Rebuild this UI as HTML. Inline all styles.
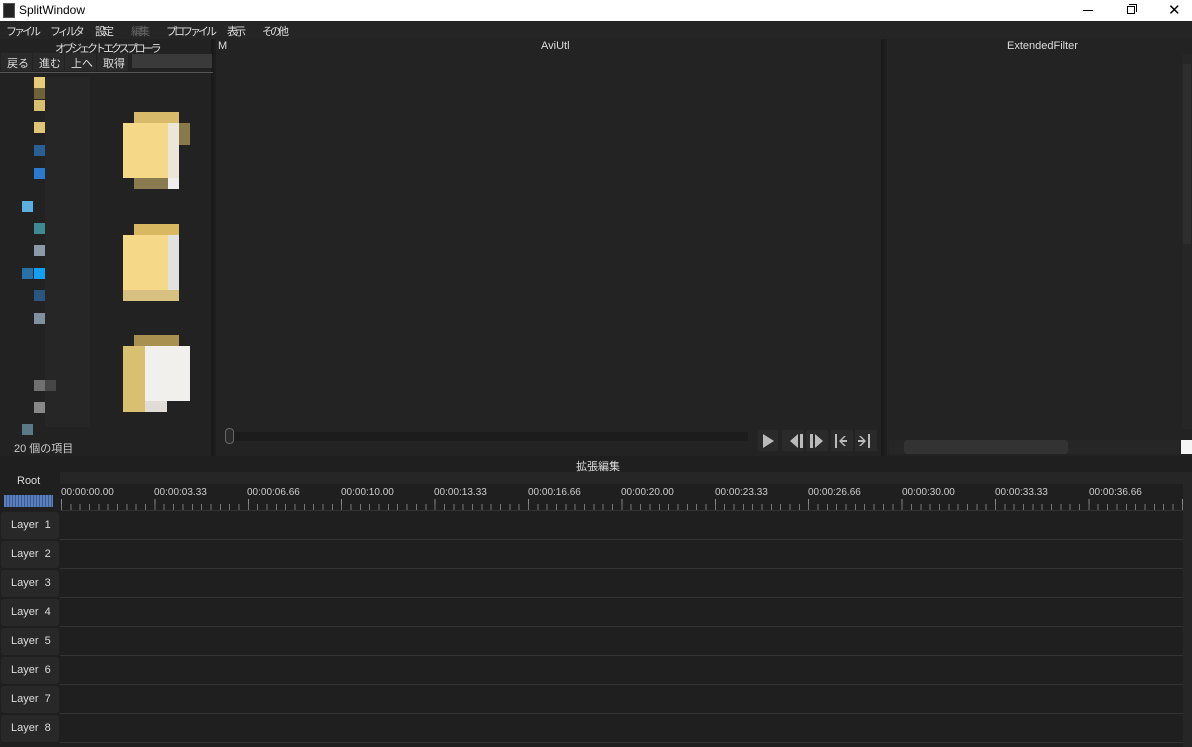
<!DOCTYPE html><html><head><meta charset="utf-8"><style>
*{margin:0;padding:0;box-sizing:border-box}
body{width:1192px;height:747px;background:#1e1e1e;font-family:"Liberation Sans","Noto Sans CJK JP",sans-serif;color:#ddd;position:relative;overflow:hidden;font-size:11px}
.a{position:absolute}
.t{position:absolute;white-space:nowrap}
.n{letter-spacing:-3px}
</style></head><body>
<div class="a" style="left:0;top:0;width:1192px;height:21px;background:#fff"></div>
<div class="a" style="left:3px;top:3px;width:12px;height:15px;background:#222;border:1px solid #555"></div>
<div class="t" style="left:19px;top:3px;font-size:12px;color:#000">SplitWindow</div>
<div class="a" style="left:1083px;top:10px;width:10px;height:1px;background:#000"></div>
<div class="a" style="left:1127px;top:6px;width:8px;height:8px;border:1px solid #000;background:#fff"></div>
<div class="a" style="left:1129px;top:4px;width:8px;height:8px;border-top:1px solid #000;border-right:1px solid #000"></div>
<div class="t" style="left:1168px;top:1px;font-size:15px;color:#000">✕</div>
<div class="a" style="left:0;top:21px;width:1192px;height:18px;background:#252525"></div>
<div class="t n" style="left:6px;top:23px">ファイル</div>
<div class="t n" style="left:50px;top:23px">フィルタ</div>
<div class="t n" style="left:95px;top:23px">設定</div>
<div class="t n" style="left:131px;top:23px;color:#666">編集</div>
<div class="t n" style="left:166px;top:23px">プロファイル</div>
<div class="t n" style="left:227px;top:23px">表示</div>
<div class="t n" style="left:262px;top:23px">その他</div>
<!-- left panel -->
<div class="a" style="left:0;top:39px;width:214px;height:417px;background:#222;border-right:3px solid #1a1a1a"></div>
<div class="t n" style="left:55px;top:40px;color:#ddd">オブジェクトエクスプローラ</div>
<div class="a" style="left:1px;top:53px;width:31px;height:18px;background:#2a2a2a"></div>
<div class="a" style="left:33px;top:53px;width:31px;height:18px;background:#2a2a2a"></div>
<div class="a" style="left:65px;top:53px;width:31px;height:18px;background:#2a2a2a"></div>
<div class="a" style="left:97px;top:53px;width:31px;height:18px;background:#2a2a2a"></div>
<div class="t" style="left:7px;top:55px">戻る</div><div class="t" style="left:39px;top:55px">進む</div><div class="t" style="left:71px;top:55px">上へ</div><div class="t" style="left:103px;top:55px">取得</div>
<div class="a" style="left:132px;top:54px;width:80px;height:14px;background:#3a3a3a"></div>
<div class="a" style="left:0;top:72px;width:213px;height:1px;background:#555"></div>
<div class="a" style="left:34px;top:77px;width:11px;height:11px;background:#e8cc7a"></div>
<div class="a" style="left:34px;top:88px;width:11px;height:11px;background:#6e6236"></div>
<div class="a" style="left:34px;top:100px;width:11px;height:11px;background:#d9bf70"></div>
<div class="a" style="left:34px;top:122px;width:11px;height:11px;background:#e0c578"></div>
<div class="a" style="left:34px;top:145px;width:11px;height:11px;background:#2a5f95"></div>
<div class="a" style="left:34px;top:168px;width:11px;height:11px;background:#2a7bd0"></div>
<div class="a" style="left:22px;top:201px;width:11px;height:11px;background:#5aaee0"></div>
<div class="a" style="left:34px;top:223px;width:11px;height:11px;background:#3f8a90"></div>
<div class="a" style="left:34px;top:245px;width:11px;height:11px;background:#8a9aa8"></div>
<div class="a" style="left:34px;top:268px;width:11px;height:11px;background:#12a0f5"></div>
<div class="a" style="left:22px;top:268px;width:11px;height:11px;background:#2870a8"></div>
<div class="a" style="left:34px;top:290px;width:11px;height:11px;background:#2a5580"></div>
<div class="a" style="left:34px;top:313px;width:11px;height:11px;background:#8090a0"></div>
<div class="a" style="left:34px;top:380px;width:22px;height:11px;background:#707070"></div>
<div class="a" style="left:34px;top:402px;width:11px;height:11px;background:#888"></div>
<div class="a" style="left:22px;top:424px;width:11px;height:11px;background:#5a7a8a"></div>
<div class="a" style="left:45px;top:77px;width:45px;height:350px;background:#2a2a2a;opacity:.6"></div>
<!-- blob1 -->
<div class="a" style="left:134px;top:112px;width:45px;height:11px;background:#d8bb6a"></div>
<div class="a" style="left:123px;top:123px;width:45px;height:55px;background:#f5d888"></div>
<div class="a" style="left:168px;top:123px;width:11px;height:55px;background:#ece6d8"></div>
<div class="a" style="left:179px;top:123px;width:11px;height:22px;background:#8a7a4a"></div>
<div class="a" style="left:134px;top:178px;width:45px;height:11px;background:#8a7a50"></div>
<div class="a" style="left:168px;top:178px;width:11px;height:11px;background:#eee"></div>
<!-- blob2 -->
<div class="a" style="left:134px;top:224px;width:45px;height:11px;background:#d8b860"></div>
<div class="a" style="left:123px;top:235px;width:45px;height:55px;background:#f5d888"></div>
<div class="a" style="left:168px;top:235px;width:11px;height:55px;background:#e0e2e0"></div>
<div class="a" style="left:123px;top:290px;width:56px;height:11px;background:#d8c080"></div>
<!-- blob3 -->
<div class="a" style="left:134px;top:335px;width:45px;height:11px;background:#a89050"></div>
<div class="a" style="left:123px;top:346px;width:22px;height:66px;background:#d8c070"></div>
<div class="a" style="left:145px;top:346px;width:45px;height:55px;background:#f2f0ec"></div>
<div class="a" style="left:145px;top:401px;width:22px;height:11px;background:#e0ddd8"></div>
<div class="t" style="left:14px;top:440px;color:#ccc">20 個の項目</div>
<!-- middle -->
<div class="a" style="left:216px;top:39px;width:668px;height:417px;background:#232323;border-right:3px solid #1a1a1a"></div>
<div class="t" style="left:218px;top:40px">M</div>
<div class="t" style="left:541px;top:40px">AviUtl</div>
<div class="a" style="left:229px;top:432px;width:519px;height:9px;background:#1c1c1c"></div>
<div class="a" style="left:225px;top:428px;width:9px;height:16px;border:1px solid #666;border-radius:4px;background:#2a2a2a"></div>
<div class="a" style="left:758px;top:430px;width:20px;height:21px;background:#2a2a2a"></div>
<div class="a" style="left:782px;top:430px;width:22px;height:21px;background:#2a2a2a"></div>
<div class="a" style="left:806px;top:430px;width:22px;height:21px;background:#2a2a2a"></div>
<div class="a" style="left:831px;top:430px;width:22px;height:21px;background:#2a2a2a"></div>
<div class="a" style="left:855px;top:430px;width:22px;height:21px;background:#2a2a2a"></div>
<svg class="a" style="left:758px;top:430px" width="122" height="22" fill="#bbb"><path d="M5 4L16 11L5 18Z"/><path d="M42 4V18H45V4ZM40 4L32 11L40 18Z"/><path d="M52 4V18H55V4ZM57 4L65 11L57 18Z"/><path d="M77 4V18H79V4ZM89 10H84L88 6H86L81 11L86 16H88L84 12H89Z"/><path d="M112 4V18H110V4ZM100 10H105L101 6H103L108 11L103 16H101L105 12H100Z"/></svg>
<!-- right -->
<div class="a" style="left:887px;top:39px;width:305px;height:417px;background:#232323"></div>
<div class="t" style="left:1007px;top:40px">ExtendedFilter</div>
<div class="a" style="left:1182px;top:54px;width:10px;height:375px;background:#262626"></div>
<div class="a" style="left:1183px;top:64px;width:8px;height:180px;background:#2e2e2e"></div>
<div class="a" style="left:889px;top:440px;width:290px;height:14px;background:#262626"></div>
<div class="a" style="left:904px;top:440px;width:164px;height:14px;background:#333;border-radius:3px"></div>
<div class="a" style="left:1181px;top:440px;width:11px;height:14px;background:#f5f5f5"></div>
<!-- timeline -->
<div class="a" style="left:0;top:457px;width:1192px;height:290px;background:#1f1f1f"></div>
<div class="t" style="left:576px;top:458px">拡張編集</div>
<div class="a" style="left:60px;top:472px;width:1132px;height:12px;background:#262626"></div>
<div class="t" style="left:17px;top:475px;font-size:11px">Root</div>
<div class="a" style="left:4px;top:495px;width:49px;height:12px;background-image:repeating-linear-gradient(90deg,#5a80c0 0 2px,#3a5a90 2px 3px)"></div>
<div class="a" style="left:61px;top:487px;width:1120px;height:14px;font-size:10px;color:#ccc">
<span class="t" style="left:0">00:00:00.00</span><span class="t" style="left:93px">00:00:03.33</span><span class="t" style="left:186px">00:00:06.66</span><span class="t" style="left:280px">00:00:10.00</span><span class="t" style="left:373px">00:00:13.33</span><span class="t" style="left:467px">00:00:16.66</span><span class="t" style="left:560px">00:00:20.00</span><span class="t" style="left:654px">00:00:23.33</span><span class="t" style="left:747px">00:00:26.66</span><span class="t" style="left:841px">00:00:30.00</span><span class="t" style="left:934px">00:00:33.33</span><span class="t" style="left:1028px">00:00:36.66</span></div>
<div class="a" style="left:61px;top:499px;width:1122px;height:11px;background:repeating-linear-gradient(90deg,#888 0 1px,transparent 1px 93.4px)"></div>
<div class="a" style="left:61px;top:504px;width:1122px;height:6px;background:repeating-linear-gradient(90deg,#777 0 1px,transparent 1px 9.34px)"></div>
<div class="a" style="left:61px;top:510px;width:1122px;height:1px;background:#333"></div>
<div class="a" style="left:1183px;top:483px;width:9px;height:264px;background:#262626"></div>
<div id="L"></div>
<script>
var h='';for(var i=0;i<8;i++){var y=511+i*29;h+='<div class="a" style="left:1px;top:'+(y+1)+'px;width:58px;height:27px;background:#282828;border-radius:3px"></div><div class="t" style="left:11px;top:'+(y+8)+'px;font-size:11px;color:#ddd">Layer&nbsp; '+(i+1)+'</div><div class="a" style="left:60px;top:'+(y+28)+'px;width:1123px;height:1px;background:#333"></div>';}
document.getElementById('L').innerHTML=h;
</script>
</body></html>
